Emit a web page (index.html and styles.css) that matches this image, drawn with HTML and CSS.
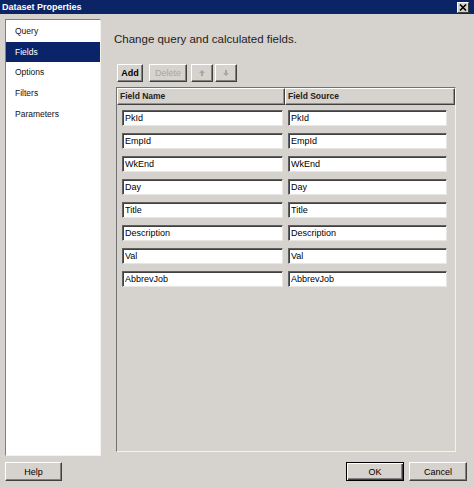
FILE: index.html
```html
<!DOCTYPE html>
<html lang="en">
<head>
    <meta charset="UTF-8">
    <title>Dataset Properties</title>
    <link rel="stylesheet" href="styles.css">
</head>
<body>
    <div class="window">
        <div class="titlebar">
            <span class="caption">Dataset Properties</span>
            <span class="close">
                <svg width="8" height="7" viewBox="0 0 8 7"><path d="M1 0.5 L7 6.5 M7 0.5 L1 6.5" stroke="#000" stroke-width="1.6"/></svg>
            </span>
        </div>

        <div class="main">
            <ul class="pages">
                <li>Query</li>
                <li class="selected">Fields</li>
                <li>Options</li>
                <li>Filters</li>
                <li>Parameters</li>
            </ul>

            <div class="page">
                <div class="heading">Change query and calculated fields.</div>

                <div class="toolbar">
                    <button class="btn add">Add</button>
                    <button class="btn delete" disabled>Delete</button>
                    <button class="btn arrow up" disabled>
                        <svg width="6" height="6" viewBox="0 0 6 6"><polygon points="3,0 6,3 4,3 4,6 2,6 2,3 0,3" fill="#a8a6a2"/></svg>
                    </button>
                    <button class="btn arrow down" disabled>
                        <svg width="6" height="6" viewBox="0 0 6 6"><polygon points="3,6 6,3 4,3 4,0 2,0 2,3 0,3" fill="#a8a6a2"/></svg>
                    </button>
                </div>

                <div class="grid">
                    <div class="grid-head">
                        <div class="col name">Field Name</div>
                        <div class="col source">Field Source</div>
                    </div>
                    <div class="grid-body" id="fields"></div>
                </div>
            </div>
        </div>

        <div class="footer">
            <button class="btn wide">Help</button>
            <div class="spacer"></div>
            <button class="btn wide default">OK</button>
            <button class="btn wide">Cancel</button>
        </div>
    </div>

    <script>
        const fields = ['PkId', 'EmpId', 'WkEnd', 'Day', 'Title', 'Description', 'Val', 'AbbrevJob'];
        const body = document.getElementById('fields');

        fields.forEach(function (name) {
            const row = document.createElement('div');
            row.className = 'grid-row';
            row.innerHTML =
                '<div class="cell name"><input type="text" class="field" value="' + name + '"></div>' +
                '<div class="cell source"><input type="text" class="field" value="' + name + '"></div>';
            body.appendChild(row);
        });
    </script>
</body>
</html>
```

FILE: styles.css
```css
body {
    margin: 0;
    background-color: #d6d2cd;
    font-family: 'Liberation Sans', Arial, sans-serif;
    font-size: 9px;
    color: #000;
}
.window {
    width: 474px;
    height: 488px;
    display: flex;
    flex-direction: column;
}

/* title bar */
.titlebar {
    height: 14px;
    background-color: #0b2465;
    display: flex;
    align-items: center;
    justify-content: space-between;
}
.caption {
    color: #fff;
    font-weight: bold;
    font-size: 9px;
    padding-left: 2px;
    line-height: 14px;
}
.close {
    width: 12px;
    height: 11px;
    margin-right: 5px;
    background-color: #d6d2cd;
    box-sizing: border-box;
    border: 1px solid;
    border-color: #fff #404040 #404040 #fff;
    display: flex;
    align-items: center;
    justify-content: center;
}

/* left page list */
.main {
    display: flex;
    height: 442px;
}
.pages {
    list-style: none;
    margin: 5px 0 0 5px;
    padding: 1px 0 0 0;
    width: 96px;
    height: 437px;
    box-sizing: border-box;
    background-color: #fff;
    border: 1px solid;
    border-color: #808080 #f4f3f1 #f4f3f1 #808080;
}
.pages li {
    height: 20.7px;
    line-height: 20.7px;
    padding-left: 9px;
    font-size: 8.5px;
    color: #111;
}
.pages li.selected {
    background-color: #0a246a;
    color: #fff;
}

/* right side */
.page {
    flex: 1;
    display: flex;
    flex-direction: column;
}
.heading {
    margin: 17px 0 0 13px;
    height: 16px;
    line-height: 16px;
    font-size: 11.5px;
    color: #222;
}
.toolbar {
    display: flex;
    margin: 17px 0 0 16px;
    height: 18px;
}
.btn {
    font-family: inherit;
    font-size: 9px;
    padding: 0;
    background-color: #d6d2cd;
    box-sizing: border-box;
    border: 1px solid;
    border-color: #fff #404040 #404040 #fff;
    box-shadow: inset -1px -1px #808080;
    color: #000;
}
.btn:disabled {
    color: #a8a6a2;
}
.add {
    width: 26px;
    font-weight: bold;
    margin-right: 6px;
}
.delete {
    width: 38px;
    margin-right: 4px;
}
.arrow {
    width: 22px;
    margin-right: 2px;
    display: flex;
    align-items: center;
    justify-content: center;
}

/* fields grid */
.grid {
    margin: 5px 0 0 15px;
    width: 340px;
    height: 365px;
    box-sizing: border-box;
    border: 1px solid;
    border-color: #707070 #f4f3f1 #f4f3f1 #707070;
}
.grid-head {
    display: flex;
    height: 17px;
}
.grid-head .col {
    box-sizing: border-box;
    border: 1px solid;
    border-color: #fff #404040 #404040 #fff;
    box-shadow: inset -1px -1px #909090;
    line-height: 15px;
    padding-left: 2px;
    font-weight: bold;
    font-size: 8.5px;
    color: #222;
}
.col.name {
    width: 168px;
}
.col.source {
    width: 170px;
}
.grid-row {
    display: flex;
    height: 23px;
    align-items: flex-start;
}
.cell {
    padding-top: 5px;
    box-sizing: border-box;
}
.cell.name {
    width: 168px;
    padding-left: 5px;
}
.cell.source {
    width: 170px;
    padding-left: 3px;
}
.field {
    display: block;
    height: 16px;
    margin: 0;
    padding: 0 0 0 2px;
    box-sizing: border-box;
    font-family: inherit;
    font-size: 9px;
    color: #000;
    background-color: #fff;
    border: 1px solid;
    border-color: #606060 #e8e6e2 #e8e6e2 #606060;
    box-shadow: inset 1px 1px #404040;
    outline: none;
}
.cell.name .field {
    width: 161px;
}
.cell.source .field {
    width: 159px;
}

/* bottom buttons */
.footer {
    display: flex;
    padding: 6px 7px 0 5px;
    height: 19px;
}
.spacer {
    flex: 1;
}
.wide {
    width: 58px;
    height: 19px;
    margin-left: 5px;
}
.wide:first-child {
    margin-left: 0;
    width: 57px;
}
.default {
    border: 1px solid #000;
    box-shadow: inset 1px 1px #fff, inset -1px -1px #404040, inset -2px -2px #808080;
}
```
